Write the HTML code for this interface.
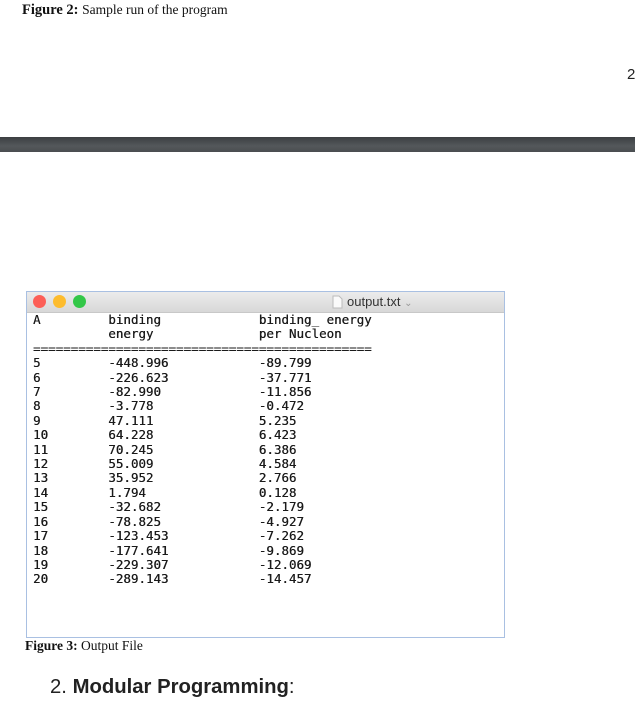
<!DOCTYPE html>
<html><head><meta charset="utf-8"><style>
body{margin:0;width:635px;height:707px;background:#fff;position:relative;overflow:hidden;font-family:"Liberation Serif",serif}
.abs{position:absolute;white-space:nowrap}
.bar{position:absolute;left:0;top:137px;width:635px;height:15px;background:linear-gradient(#3c3f42,#54585b 60%,#4a4d50)}
.win{position:absolute;left:26px;top:291px;width:477px;height:345px;border:1px solid #a9c0e2;background:#fff}
.tb{position:absolute;left:0;top:0;width:477px;height:20px;background:linear-gradient(#ececec,#d8d8d8);border-bottom:1px solid #c8c8c8}
.dot{position:absolute;top:3px;width:13px;height:13px;border-radius:50%}
pre{position:absolute;left:6px;top:21px;margin:0;font-family:"DejaVu Sans Mono","Liberation Mono",monospace;font-size:12.5px;line-height:14.4px;color:#1a1a1a;text-shadow:0.3px 0 0 #1a1a1a}
</style></head><body>
<div class="abs" style="left:22px;top:2px;font-size:14.5px;color:#111"><b>Figure 2:</b> <span style="font-size:13.5px">Sample run of the program</span></div>
<div class="abs" style="left:627px;top:66px;font-family:'Liberation Sans',sans-serif;font-size:15px;color:#222">2</div>
<div class="bar"></div>
<div class="win">
<div class="tb">
<div class="dot" style="left:6px;background:#fc5f57"></div>
<div class="dot" style="left:26px;background:#fdbc2e"></div>
<div class="dot" style="left:46px;background:#33c748"></div>
<svg class="abs" style="left:305px;top:3px" width="11" height="14"><path d="M1 1H7L10 4V13H1Z" fill="#fafafa" stroke="#bbb"/></svg>
<div class="abs" style="left:320px;top:2px;font-family:'Liberation Sans',sans-serif;font-size:13px;color:#333">output.txt <span style="color:#999;font-size:10px">&#8964;</span></div>
</div>
<pre>A         binding             binding_ energy
          energy              per Nucleon
=============================================
5         -448.996            -89.799
6         -226.623            -37.771
7         -82.990             -11.856
8         -3.778              -0.472
9         47.111              5.235
10        64.228              6.423
11        70.245              6.386
12        55.009              4.584
13        35.952              2.766
14        1.794               0.128
15        -32.682             -2.179
16        -78.825             -4.927
17        -123.453            -7.262
18        -177.641            -9.869
19        -229.307            -12.069
20        -289.143            -14.457</pre>
</div>
<div class="abs" style="left:25px;top:638px;font-size:13.5px;color:#111"><b>Figure 3:</b> Output File</div>
<div class="abs" style="left:50px;top:676px;font-family:'Liberation Sans',sans-serif;font-size:20.3px;color:#222">2. <b>Modular Programming</b>:</div>
</body></html>
